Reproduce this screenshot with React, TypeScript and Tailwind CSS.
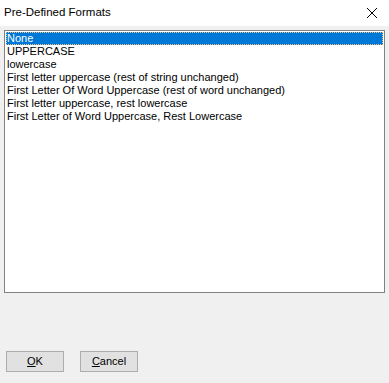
import React from "react";

const items = [
  "None",
  "UPPERCASE",
  "lowercase",
  "First letter uppercase (rest of string unchanged)",
  "First Letter Of Word Uppercase (rest of word unchanged)",
  "First letter uppercase, rest lowercase",
  "First Letter of Word Uppercase, Rest Lowercase",
];

export default function App() {
  return (
    <div
      className="w-[389px] h-[383px] flex flex-col bg-[#f0f0f0] text-black overflow-hidden"
      style={{ fontFamily: '"Liberation Sans", Arial, sans-serif' }}
    >
      <div className="h-[26px] bg-white flex items-center justify-between pl-[4px] pr-[10px]">
        <span className="text-[11.5px]">Pre-Defined Formats</span>
        <svg width="12" height="12" viewBox="0 0 12 12" className="mr-[1px]">
          <path d="M1 1 L11 11 M11 1 L1 11" stroke="#000" strokeWidth="1" fill="none" />
        </svg>
      </div>

      <div className="flex-1 flex flex-col px-[4px] pt-[4px]">
        <div className="h-[263px] bg-white border border-[#828282] p-[1px]">
          {items.map((item, i) => (
            <div
              key={item}
              className={
                i === 0
                  ? "h-[13px] leading-[13px] text-[11px] pl-[1px] bg-[#0078d7] text-white outline outline-1 outline-dotted outline-[#f0c080] -outline-offset-1"
                  : "h-[13px] leading-[13px] text-[11px] pl-[1px]"
              }
            >
              {item}
            </div>
          ))}
        </div>

        <div className="flex gap-[16px] mt-[58px] pl-[2px]">
          <button className="w-[58px] h-[21px] bg-[#e1e1e1] border border-[#adadad] text-[11px]">
            <span className="underline">O</span>K
          </button>
          <button className="w-[58px] h-[21px] bg-[#e1e1e1] border border-[#adadad] text-[11px]">
            <span className="underline">C</span>ancel
          </button>
        </div>
      </div>
    </div>
  );
}
